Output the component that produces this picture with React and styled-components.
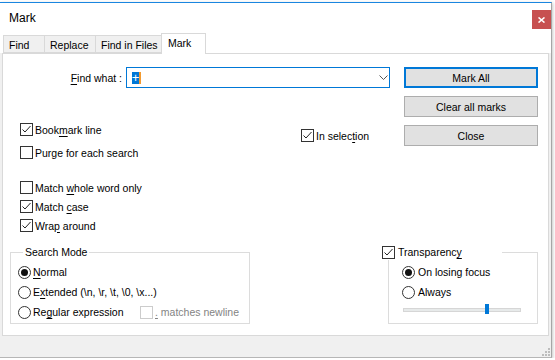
import React from 'react'
import styled, { createGlobalStyle } from 'styled-components'

const GlobalStyle = createGlobalStyle`
  html, body {
    margin: 0;
    padding: 0;
    background: #fff;
  }
  body {
    font-family: "Liberation Sans", Arial, sans-serif;
    font-size: 10.5px;
    color: #000;
  }
  * { box-sizing: border-box; }
`

const Window = styled.div`
  margin-top: 2px;
  width: 552px;
  height: 356px;
  display: flex;
  flex-direction: column;
  background: #f0f0f0;
  border-top: 1px solid #1a86e0;
  border-right: 1px solid #a6a6a6;
  border-bottom: 1px solid #b6b6b6;
  box-shadow: 1px 1px 3px rgba(0, 0, 0, .22);
`

const TitleBar = styled.div`
  height: 30px;
  background: #fff;
  display: flex;
  justify-content: space-between;
  padding-left: 9px;
  & > span {
    font-size: 12px;
    line-height: 30px;
  }
`

const CloseBtn = styled.div`
  width: 19px;
  height: 19px;
  margin-top: 7px;
  background: #c75050;
  display: flex;
  align-items: center;
  justify-content: center;
`

const TabRow = styled.div`
  height: 20px;
  background: #fff;
  display: flex;
  align-items: flex-end;
  padding-left: 3px;
`

const Tab = styled.div`
  position: relative;
  width: ${p => p.$w}px;
  height: ${p => (p.$active ? 21 : 18)}px;
  margin-right: -1px;
  margin-bottom: ${p => (p.$active ? -1 : 0)}px;
  padding: ${p => (p.$active ? '2px 0 0 6px' : '2px 0 0 5px')};
  border: 1px solid #d9d9d9;
  border-bottom: ${p => (p.$active ? 'none' : '1px solid #d9d9d9')};
  background: ${p => (p.$active ? '#fff' : '#f0f0f0')};
  z-index: ${p => (p.$active ? 2 : 1)};
  white-space: nowrap;
  line-height: 14px;
`

const Panel = styled.div`
  height: 283px;
  margin: 0 2px;
  background: #fff;
  border: 1px solid #d9d9d9;
  display: flex;
  flex-direction: column;
`

const TopSection = styled.div`
  display: grid;
  grid-template-columns: 401px 134px;
`

const FindRow = styled.div`
  margin-top: 13px;
  display: flex;
  align-items: center;
  & > label {
    width: 119px;
    margin-right: 4px;
    text-align: right;
  }
`

const Combo = styled.div`
  width: 264px;
  height: 21px;
  border: 1px solid #0078d7;
  display: flex;
  align-items: center;
  justify-content: space-between;
  padding: 0 1px 0 5px;
`

const Selected = styled.span`
  display: flex;
  align-items: center;
  justify-content: center;
  width: 9px;
  height: 12px;
  background: #0078d7;
  color: #fff;
  font-size: 13px;
  border-right: 2px solid #f39a2f;
`

const Options = styled.div`
  display: grid;
  grid-template-columns: 281px auto;
  padding-left: 17px;
  margin-top: 32px;
`

const OptionList = styled.div`
  display: flex;
  flex-direction: column;
`

const CheckRow = styled.div`
  height: 19px;
  display: flex;
  align-items: center;
  gap: 2px;
  margin-top: ${p => p.$mt || 0}px;
  color: ${p => (p.$disabled ? '#838383' : '#000')};
  white-space: nowrap;
`

const Box = styled.span`
  width: 13px;
  height: 13px;
  flex: none;
  border: 1px solid ${p => (p.$disabled ? '#cccccc' : '#333')};
  background: #fff;
  display: flex;
  align-items: center;
  justify-content: center;
`

const Circle = styled.span`
  width: 13px;
  height: 13px;
  flex: none;
  border: 1px solid #333;
  border-radius: 50%;
  background: #fff;
  display: flex;
  align-items: center;
  justify-content: center;
  &::after {
    content: '';
    display: ${p => (p.$on ? 'block' : 'none')};
    width: 7px;
    height: 7px;
    border-radius: 50%;
    background: #111;
  }
`

const Key = styled.u`
  text-decoration: underline;
  text-underline-offset: 2px;
`

const ButtonCol = styled.div`
  padding-top: 13px;
  display: flex;
  flex-direction: column;
  gap: 8px;
`

const Button = styled.div`
  height: 21px;
  background: #e1e1e1;
  border: ${p => (p.$primary ? '2px solid #0078d7' : '1px solid #adadad')};
  display: flex;
  align-items: center;
  justify-content: center;
`

const BottomSection = styled.div`
  margin-top: 17px;
  padding: 0 10px 0 7px;
  display: flex;
  justify-content: space-between;
`

const Group = styled.div`
  width: ${p => p.$w}px;
  height: 72px;
  border: 1px solid #dcdcdc;
  display: flex;
  flex-direction: column;
  padding-left: ${p => p.$pl}px;
`

const Caption = styled.div`
  align-self: flex-start;
  height: 15px;
  margin-top: -8px;
  margin-left: ${p => p.$ml}px;
  width: ${p => (p.$w ? `${p.$w}px` : 'auto')};
  padding: 0 2px 0 ${p => p.$pl || 0}px;
  background: #fff;
  display: flex;
  align-items: center;
  gap: 3px;
  line-height: 15px;
`

const RadioRow = styled.div`
  height: 20px;
  display: flex;
  align-items: center;
  margin-top: ${p => p.$mt || 0}px;
  white-space: nowrap;
`

const RadioItem = styled.div`
  display: flex;
  align-items: center;
  gap: ${p => p.$gap || 2}px;
  width: ${p => (p.$w ? `${p.$w}px` : 'auto')};
`

const Slider = styled.div`
  position: relative;
  margin: 6px 0 0 1px;
  width: 118px;
  height: 4px;
  background: #e7eaea;
  border: 1px solid #d6d6d6;
  & > span {
    position: absolute;
    left: 81px;
    top: -5px;
    width: 4px;
    height: 10px;
    background: #0078d7;
  }
`

const Footer = styled.div`
  height: 21px;
  display: flex;
  justify-content: flex-end;
  align-items: flex-end;
`

const Tick = () => (
  <svg width="11" height="11" viewBox="0 0 11 11">
    <polyline points="1.5,5.5 4,8 9.5,2" fill="none" stroke="#222" strokeWidth="1" />
  </svg>
)

const Check = ({ on, disabled, mt, children }) => (
  <CheckRow $mt={mt} $disabled={disabled}>
    <Box $disabled={disabled}>{on && <Tick />}</Box>
    <span>{children}</span>
  </CheckRow>
)

const Radio = ({ on, w, gap, children }) => (
  <RadioItem $w={w} $gap={gap}>
    <Circle $on={on} />
    <span>{children}</span>
  </RadioItem>
)

export default function App() {
  return (
    <>
      <GlobalStyle />
      <Window>
        <TitleBar>
          <span>Mark</span>
          <CloseBtn>
            <svg width="7" height="6" viewBox="0 0 7 6">
              <path d="M0.5 0.5 L6.5 5.5 M6.5 0.5 L0.5 5.5" stroke="#fff" strokeWidth="1.6" />
            </svg>
          </CloseBtn>
        </TitleBar>

        <TabRow>
          <Tab $w={42}>Find</Tab>
          <Tab $w={52}>Replace</Tab>
          <Tab $w={67}>Find in Files</Tab>
          <Tab $w={45} $active>Mark</Tab>
        </TabRow>

        <Panel>
          <TopSection>
            <div>
              <FindRow>
                <label><Key>F</Key>ind what :</label>
                <Combo>
                  <Selected>+</Selected>
                  <svg width="9" height="5" viewBox="0 0 9 5">
                    <polyline points="0.5,0.5 4.5,4.5 8.5,0.5" fill="none" stroke="#555" strokeWidth="1" />
                  </svg>
                </Combo>
              </FindRow>

              <Options>
                <OptionList>
                  <Check on>Book<Key>m</Key>ark line</Check>
                  <Check mt={4}>Purge for each search</Check>
                  <Check mt={16}>Match <Key>w</Key>hole word only</Check>
                  <Check on>Match <Key>c</Key>ase</Check>
                  <Check on>Wra<Key>p</Key> around</Check>
                </OptionList>
                <div>
                  <Check on mt={6}>In selec<Key>t</Key>ion</Check>
                </div>
              </Options>
            </div>

            <ButtonCol>
              <Button $primary>Mark All</Button>
              <Button>Clear all marks</Button>
              <Button>Close</Button>
            </ButtonCol>
          </TopSection>

          <BottomSection>
            <Group $w={240} $pl={7}>
              <Caption $ml={5} $pl={2}>Search Mode</Caption>
              <RadioRow $mt={2}>
                <Radio on><Key>N</Key>ormal</Radio>
              </RadioRow>
              <RadioRow>
                <Radio>E<Key>x</Key>tended (\n, \r, \t, \0, \x...)</Radio>
              </RadioRow>
              <RadioRow>
                <Radio w={122}>Re<Key>g</Key>ular expression</Radio>
                <Check disabled><Key>.</Key> matches newline</Check>
              </RadioRow>
            </Group>

            <Group $w={150} $pl={13}>
              <Caption $ml={-20} $w={120}>
                <Box><Tick /></Box>
                <span>Transparenc<Key>y</Key></span>
              </Caption>
              <RadioRow $mt={2}>
                <Radio on gap={3}>On losing focus</Radio>
              </RadioRow>
              <RadioRow>
                <Radio gap={3}>Always</Radio>
              </RadioRow>
              <Slider><span /></Slider>
            </Group>
          </BottomSection>
        </Panel>

        <Footer>
          <svg width="9" height="9" viewBox="0 0 9 9">
            <g fill="#bdbdbd">
              <rect x="6" y="0" width="2" height="2" />
              <rect x="3" y="3" width="2" height="2" />
              <rect x="6" y="3" width="2" height="2" />
              <rect x="0" y="6" width="2" height="2" />
              <rect x="3" y="6" width="2" height="2" />
              <rect x="6" y="6" width="2" height="2" />
            </g>
          </svg>
        </Footer>
      </Window>
    </>
  )
}
